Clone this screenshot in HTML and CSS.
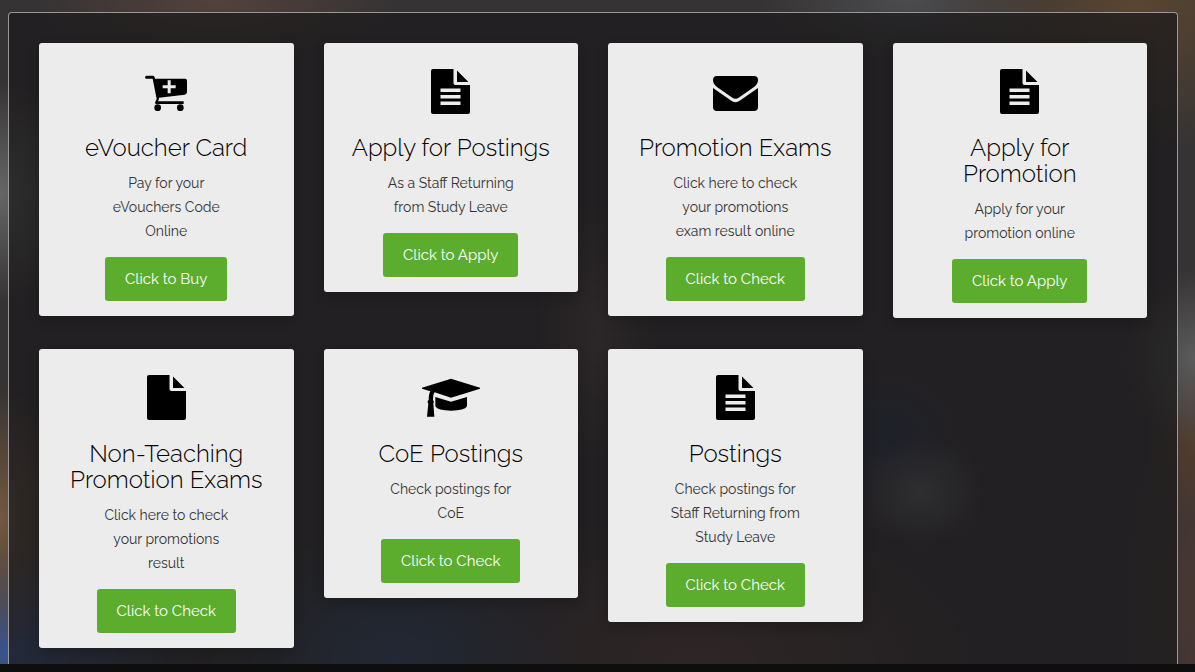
FILE: index.html
```html
<!DOCTYPE html>
<html lang="en">
<head>
    <meta charset="UTF-8">
    <meta name="viewport" content="width=device-width, initial-scale=1.0">
    <title>Online Services</title>
    <link rel="stylesheet" href="styles.css">
</head>
<body>
    <!-- Shared icon shapes -->
    <svg class="sprite" aria-hidden="true">
        <symbol id="icon-file" viewBox="0 0 39 45">
            <path d="M2 0H22.500V14Q22.500 16 24.500 16H39V43Q39 45 37 45H2Q0 45 0 43V2Q0 0 2 0ZM26 1.500L37.500 13H26Z"/>
        </symbol>
        <symbol id="icon-file-text" viewBox="0 0 39 45">
            <path fill-rule="evenodd" d="M2 0H22.500V14Q22.500 16 24.500 16H39V43Q39 45 37 45H2Q0 45 0 43V2Q0 0 2 0ZM26 1.500L37.500 13H26ZM9.500 19.500V23H29.500V19.500ZM9.500 26V29.500H29.500V26ZM9.500 32.500V36H29.500V32.500Z"/>
        </symbol>
    </svg>

    <main class="hero">
        <div class="panel">
            <div class="card">
                <svg class="icon" width="42" height="45" viewBox="0 0 126 135" aria-hidden="true">
                    <path fill-rule="evenodd" d="M5 20H24Q29 20 30 29H120Q126 29 126 35V69Q126 76 119 77L42 86Q42 92 39 97H116V105H34Q28 104 31 98L35 90L23 29H5Q0 29 0 24.500Q0 20 5 20ZM68 34V49H53V58H68V73H77V58H92V49H77V34Z"/>
                    <circle cx="38" cy="116" r="10"/>
                    <circle cx="106" cy="116" r="10"/>
                </svg>
                <h3>eVoucher Card</h3>
                <p>Pay for your eVouchers Code Online</p>
                <button type="button" class="btn">Click to Buy</button>
            </div>

            <div class="card">
                <svg class="icon" width="39" height="45" aria-hidden="true"><use href="#icon-file-text"/></svg>
                <h3>Apply for Postings</h3>
                <p>As a Staff Returning from Study Leave</p>
                <button type="button" class="btn">Click to Apply</button>
            </div>

            <div class="card">
                <svg class="icon" width="45" height="45" viewBox="0 0 45 45" aria-hidden="true">
                    <path d="M4 7H41Q45 7 45 11Q45 15 41 18L26 28.500Q22.500 31 19 28.500L4 18Q0 15 0 11Q0 7 4 7Z"/>
                    <path d="M0 19L18 31.500Q22.500 35 27 31.500L45 19V38Q45 42 41 42H4Q0 42 0 38Z"/>
                </svg>
                <h3>Promotion Exams</h3>
                <p>Click here to check your promotions exam result online</p>
                <button type="button" class="btn">Click to Check</button>
            </div>

            <div class="card">
                <svg class="icon" width="39" height="45" aria-hidden="true"><use href="#icon-file-text"/></svg>
                <h3>Apply for Promotion</h3>
                <p>Apply for your promotion online</p>
                <button type="button" class="btn">Click to Apply</button>
            </div>

            <div class="card">
                <svg class="icon" width="39" height="45" aria-hidden="true"><use href="#icon-file"/></svg>
                <h3>Non-Teaching Promotion Exams</h3>
                <p>Click here to check your promotions result</p>
                <button type="button" class="btn">Click to Check</button>
            </div>

            <div class="card">
                <svg class="icon" width="58" height="45" viewBox="0 0 174 135" aria-hidden="true">
                    <path d="M87 11L174 38V41L87 68L38 52Q33 57 33 75Q38 79 34 86L37 125H15L19 86Q14 79 20 75Q20 57 25 49L0 41V38Z"/>
                    <path d="M40 66L87 80L135 66V94Q128 107 87 107Q47 107 40 94Z"/>
                </svg>
                <h3>CoE Postings</h3>
                <p>Check postings for CoE</p>
                <button type="button" class="btn">Click to Check</button>
            </div>

            <div class="card">
                <svg class="icon" width="39" height="45" aria-hidden="true"><use href="#icon-file-text"/></svg>
                <h3>Postings</h3>
                <p>Check postings for Staff Returning from Study Leave</p>
                <button type="button" class="btn">Click to Check</button>
            </div>
        </div>
    </main>
</body>
</html>
```

FILE: styles.css
```css
* {
    box-sizing: border-box;
}

body {
    font-family: Raleway, Lato, sans-serif;
    background-color: #0e0e0e;
    margin: 0;
    padding: 0 0 8px;
}

.sprite {
    display: none;
}

/* Soft, out of focus backdrop */
.hero {
    padding: 12px 17px 0 8px;
    background:
        radial-gradient(ellipse 90px 110px at 0% 29%, #666, transparent),
        radial-gradient(ellipse 70px 130px at 0% 78%, #75583f, transparent),
        radial-gradient(ellipse 190px 110px at 1% 98%, #3a5590, transparent),
        radial-gradient(ellipse 190px 130px at 33% 99%, #34507c, transparent),
        radial-gradient(ellipse 280px 150px at 58% 100%, #654644, transparent),
        radial-gradient(ellipse 65px 55px at 77% 74%, #64646c, transparent),
        radial-gradient(ellipse 80px 70px at 74% 66%, #283454, transparent),
        radial-gradient(ellipse 60px 130px at 50% 50%, #5c4c4e, transparent),
        radial-gradient(ellipse 70px 90px at 100% 54%, #5c5c5c, transparent),
        radial-gradient(ellipse 50px 80px at 100% 67%, #523c2c, transparent),
        radial-gradient(ellipse 80px 220px at 101% 90%, #4a3833, transparent),
        radial-gradient(ellipse 190px 150px at 95% 0%, #5a4630, transparent),
        radial-gradient(ellipse 150px 60px at 76% 0%, #4c4c4e, transparent),
        radial-gradient(ellipse 180px 60px at 18% 0%, #54423b, transparent),
        #363334;
}

.panel {
    display: grid;
    grid-template-columns: repeat(4, 1fr);
    align-items: start;
    gap: 31px 30px;
    padding: 30px 30px 16px;
    background-color: rgba(28, 27, 28, 0.75);
    border: 1px solid #999;
    border-bottom: none;
    border-radius: 4px 4px 0 0;
}

.card {
    padding: 26px 25px 15px;
    background-color: #ececec;
    border-radius: 3px;
    box-shadow: 0 4px 12px rgba(0, 0, 0, 0.2);
    text-align: center;
}

.icon {
    display: block;
    margin: 0 auto 21px;
    fill: #000;
}

.card h3 {
    margin: 0 0 10px;
    font-size: 24px;
    font-weight: 300;
    line-height: 26px;
    color: #000;
}

.card p {
    max-width: 134px;
    margin: 0 auto 14px;
    font-size: 14px;
    font-weight: 400;
    line-height: 24px;
    color: #333;
}

.btn {
    height: 44px;
    padding: 0 20px;
    background-color: #5cad2e;
    color: white;
    border: none;
    border-radius: 3px;
    font-family: inherit;
    font-size: 15px;
    cursor: pointer;
}

.btn:hover {
    background-color: #4f9727;
}

@media (max-width: 900px) {
    .panel {
        grid-template-columns: repeat(2, 1fr);
    }
}

@media (max-width: 520px) {
    .panel {
        grid-template-columns: 1fr;
    }
}
```
